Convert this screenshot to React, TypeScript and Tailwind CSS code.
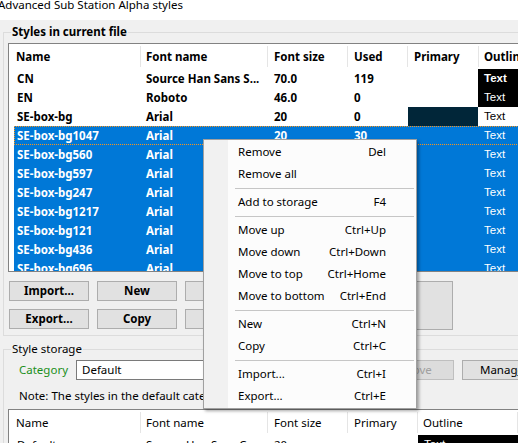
import React from 'react'

type Row = {
  name: string
  font: string
  size: string
  used: string
  primary?: string
  outline: 'bold' | 'black' | 'white' | 'sel'
  selected?: boolean
  focus?: boolean
}

const rows: Row[] = [
  { name: 'CN', font: 'Source Han Sans S...', size: '70.0', used: '119', outline: 'bold' },
  { name: 'EN', font: 'Roboto', size: '46.0', used: '0', outline: 'black' },
  { name: 'SE-box-bg', font: 'Arial', size: '20', used: '0', primary: 'bg-[#012639]', outline: 'white' },
  { name: 'SE-box-bg1047', font: 'Arial', size: '20', used: '30', outline: 'sel', selected: true, focus: true },
  { name: 'SE-box-bg560', font: 'Arial', size: '20', used: '28', outline: 'sel', selected: true },
  { name: 'SE-box-bg597', font: 'Arial', size: '20', used: '12', outline: 'sel', selected: true },
  { name: 'SE-box-bg247', font: 'Arial', size: '20', used: '9', outline: 'sel', selected: true },
  { name: 'SE-box-bg1217', font: 'Arial', size: '20', used: '4', outline: 'sel', selected: true },
  { name: 'SE-box-bg121', font: 'Arial', size: '20', used: '2', outline: 'sel', selected: true },
  { name: 'SE-box-bg436', font: 'Arial', size: '20', used: '1', outline: 'sel', selected: true },
  { name: 'SE-box-bg696', font: 'Arial', size: '20', used: '1', outline: 'sel', selected: true },
]

type MenuItem = { label: string; key?: string } | 'sep'

const menu: MenuItem[] = [
  { label: 'Remove', key: 'Del' },
  { label: 'Remove all' },
  'sep',
  { label: 'Add to storage', key: 'F4' },
  'sep',
  { label: 'Move up', key: 'Ctrl+Up' },
  { label: 'Move down', key: 'Ctrl+Down' },
  { label: 'Move to top', key: 'Ctrl+Home' },
  { label: 'Move to bottom', key: 'Ctrl+End' },
  'sep',
  { label: 'New', key: 'Ctrl+N' },
  { label: 'Copy', key: 'Ctrl+C' },
  'sep',
  { label: 'Import...', key: 'Ctrl+I' },
  { label: 'Export...', key: 'Ctrl+E' },
]

function HeadCell({ label, w, pl = 'pl-[6px]' }: { label: string; w: string; pl?: string }) {
  return (
    <div className={`flex h-[25px] shrink-0 ${w}`}>
      <span className={`flex-1 whitespace-nowrap leading-[25px] ${pl}`}>{label}</span>
      <div className="my-[2px] w-px bg-[#e5e5e5]" />
    </div>
  )
}

function Btn({ label = '', w = 'w-[80px]' }: { label?: string; w?: string }) {
  return (
    <div
      className={`flex h-[20px] shrink-0 items-center justify-center border border-[#adadad] bg-[#e1e1e1] font-bold ${w}`}
    >
      {label}
    </div>
  )
}

function StylesList() {
  return (
    <div className="h-[229px] w-[580px] overflow-hidden border border-[#828282] bg-white font-bold">
      <div className="flex">
        <HeadCell label="Name" w="w-[132px]" pl="pl-[7px]" />
        <HeadCell label="Font name" w="w-[127px]" pl="pl-[5px]" />
        <HeadCell label="Font size" w="w-[80px]" />
        <HeadCell label="Used" w="w-[60px]" />
        <HeadCell label="Primary" w="w-[71px]" />
        <HeadCell label="Outline" w="w-[100px]" pl="pl-[5px]" />
      </div>
      <div className="pl-[5px]">
        {rows.map((r) => (
          <div
            key={r.name}
            className={`relative flex h-[19px] leading-[19px] whitespace-nowrap ${
              r.selected ? 'bg-[#0078d7] text-white' : 'text-black'
            }`}
          >
            {r.focus && (
              <div className="pointer-events-none absolute inset-0 border border-dotted border-[#f7941d]" />
            )}
            <div className="w-[127px] shrink-0 pl-[3px]">{r.name}</div>
            <div className="w-[127px] shrink-0 pl-[5px]">{r.font}</div>
            <div className="w-[80px] shrink-0 pl-[6px]">{r.size}</div>
            <div className="w-[60px] shrink-0 pl-[6px]">{r.used}</div>
            <div className={`w-[70px] shrink-0 ${r.primary ?? ''}`} />
            <div
              className={`w-[100px] shrink-0 pl-[6px] font-['Liberation_Sans',Arial,sans-serif] text-[11.5px] ${
                r.outline === 'bold'
                  ? 'bg-black font-bold text-white'
                  : r.outline === 'black'
                    ? 'bg-black font-normal text-white'
                    : r.outline === 'white'
                      ? 'font-normal text-black'
                      : 'font-normal text-white'
              }`}
            >
              Text
            </div>
          </div>
        ))}
      </div>
    </div>
  )
}

function StorageList() {
  return (
    <div className="h-[40px] w-[580px] overflow-hidden border border-[#828282] bg-white">
      <div className="flex">
        <HeadCell label="Name" w="w-[132px]" pl="pl-[7px]" />
        <HeadCell label="Font name" w="w-[127px]" pl="pl-[5px]" />
        <HeadCell label="Font size" w="w-[80px]" />
        <HeadCell label="Primary" w="w-[70px]" />
        <HeadCell label="Outline" w="w-[100px]" pl="pl-[5px]" />
      </div>
      <div className="flex h-[19px] pl-[5px] leading-[19px] whitespace-nowrap">
        <div className="w-[127px] shrink-0 pl-[3px]">Default</div>
        <div className="w-[127px] shrink-0 pl-[5px]">Source Han Sans C...</div>
        <div className="w-[80px] shrink-0 pl-[6px]">20</div>
        <div className="w-[70px] shrink-0" />
        <div className="w-[100px] shrink-0 bg-black pl-[6px] font-['Liberation_Sans',Arial,sans-serif] text-[11.5px] text-white">
          Text
        </div>
      </div>
    </div>
  )
}

function ContextMenu() {
  return (
    <div className="absolute top-[139px] left-[203px] flex w-[214px] border border-[#a0a0a0] bg-[#fcfcfc] shadow-[2px_2px_3px_rgba(0,0,0,0.35)]">
      <div className="w-[24px] shrink-0 bg-[#f1f1f1]" />
      <div className="flex-1 py-[1px]">
        {menu.map((m, i) =>
          m === 'sep' ? (
            <div key={i} className="flex h-[6px] items-center pl-[7px] pr-[2px]">
              <div className="h-px flex-1 bg-[#c6c6c6]" />
            </div>
          ) : (
            <div key={i} className="flex h-[22px] items-center justify-between pr-[30px] pl-[10px] leading-[22px] whitespace-nowrap">
              <span>{m.label}</span>
              {m.key && <span>{m.key}</span>}
            </div>
          ),
        )}
      </div>
    </div>
  )
}

export default function App() {
  return (
    <div className="relative h-[443px] w-[518px] overflow-hidden bg-[#f0f0f0] font-['Noto_Sans','Open_Sans',sans-serif] text-[11.5px] text-black">
      <div className="h-[20px] overflow-hidden bg-white">
        <div className="-mt-[3px] -ml-[2px] leading-[16px] whitespace-nowrap">Advanced Sub Station Alpha styles</div>
      </div>

      <div className="w-[620px] pt-[12px] pl-[3px]">
        {/* Styles in current file */}
        <div className="relative border border-[#dcdcdc] pt-[10px] pr-[4px] pb-[5px] pl-[4px]">
          <span className="absolute -top-[9px] left-[7px] bg-[#f0f0f0] px-[1px] leading-[16px] font-bold">
            Styles in current file
          </span>
          <StylesList />
          <div className="mt-[9px] flex gap-[8px] pl-[1px]">
            <div className="flex flex-col gap-[8px]">
              <div className="flex gap-[8px]">
                <Btn label="Import..." />
                <Btn label="New" />
                <Btn />
                <Btn />
              </div>
              <div className="flex gap-[8px]">
                <Btn label="Export..." />
                <Btn label="Copy" />
                <Btn />
                <Btn />
              </div>
            </div>
            <div className="h-[49px] w-[92px] border border-[#adadad] bg-[#e1e1e1]" />
          </div>
        </div>

        {/* Style storage */}
        <div className="relative mt-[13px] border border-[#dcdcdc] pt-[10px] pl-[4px]">
          <span className="absolute -top-[9px] left-[7px] bg-[#f0f0f0] px-[1px] leading-[16px]">Style storage</span>
          <div className="flex items-center">
            <span className="w-[68px] pl-[11px] leading-[16px] text-[#1a8f1a]">Category</span>
            <div className="flex h-[20px] w-[282px] items-center border border-[#7a7a7a] bg-white pl-[5px]">Default</div>
            <div className="ml-[8px] flex h-[20px] w-[88px] items-center justify-center border border-[#bfbfbf] bg-[#dcdcdc] text-[#a0a0a0]">
              Remove
            </div>
            <div className="ml-[8px] flex h-[20px] w-[80px] items-center justify-center border border-[#adadad] bg-[#e1e1e1]">
              <span>
                Mana<span className="underline">g</span>e
              </span>
            </div>
          </div>
          <div className="mt-[8px] pl-[11px] leading-[16px] whitespace-nowrap">
            Note: The styles in the default category will be used for new ASSA files
          </div>
          <div className="mt-[5px]">
            <StorageList />
          </div>
        </div>
      </div>

      <ContextMenu />
    </div>
  )
}
